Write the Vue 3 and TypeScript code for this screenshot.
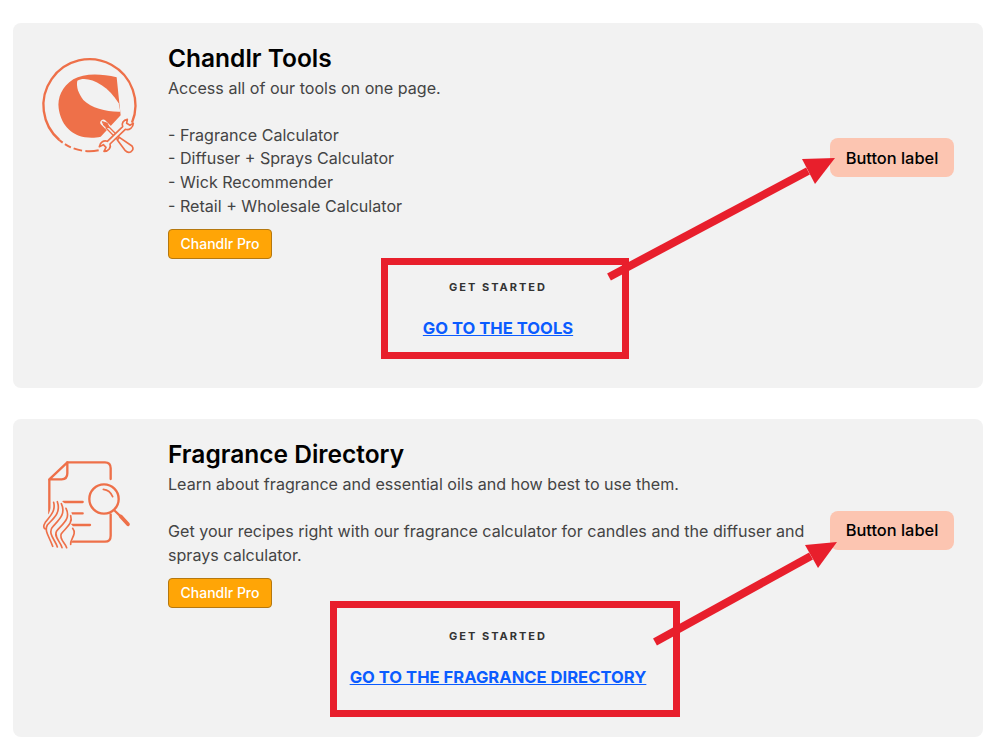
<script setup lang="ts">
interface Card {
  id: string;
  title: string;
  lines: string[];
  link: string;
  rect: { x: number; y: number; width: number; height: number };
  shaft: string;
  head: string;
}

// annotation coordinates are relative to the card's top left corner
const cards: Card[] = [
  {
    id: 'tools',
    title: 'Chandlr Tools',
    lines: [
      'Access all of our tools on one page.',
      '',
      '- Fragrance Calculator',
      '- Diffuser + Sprays Calculator',
      '- Wick Recommender',
      '- Retail + Wholesale Calculator'
    ],
    link: 'GO TO THE TOOLS',
    rect: { x: 371.5, y: 238.5, width: 241, height: 94 },
    shaft: 'M596 254 L795 148',
    head: '822,135 789,136 802,161'
  },
  {
    id: 'directory',
    title: 'Fragrance Directory',
    lines: [
      'Learn about fragrance and essential oils and how best to use them.',
      '',
      'Get your recipes right with our fragrance calculator for candles and the diffuser and sprays calculator.'
    ],
    link: 'GO TO THE FRAGRANCE DIRECTORY',
    rect: { x: 320.5, y: 185.5, width: 343, height: 109 },
    shaft: 'M642 223 L798 137',
    head: '824,123 792,126 805,149'
  }
];
</script>

<template>
  <div class="page">
    <section v-for="card in cards" :key="card.id" class="card">
      <div class="row">
        <svg
          v-if="card.id === 'tools'"
          class="icon icon-tools"
          xmlns="http://www.w3.org/2000/svg"
          width="140"
          height="130"
          viewBox="0 0 420 390"
          fill="none"
        >
          <path d="M118 300 A138 138 0 1 1 336 248" stroke="#ee7049" stroke-width="7" />
          <path d="M118 300 A138 138 0 0 0 240 330" stroke="#ee7049" stroke-width="6" stroke-dasharray="13 8 20 9 26 10 40 9" />
          <path d="M290 112 C240 100 190 100 160 118 C125 140 112 175 116 205 C122 250 150 285 195 292 C210 294 228 294 242 290 L302 226 L296 170 Z" fill="#ee7049" />
          <path d="M172 122 C200 106 260 130 296 190 L301 215 C260 216 215 205 190 180 C175 160 168 140 172 122 Z" fill="#f2f2f2" />
          <g stroke-linejoin="round" stroke-linecap="round">
            <path d="M250 248 L268 266 L335 332 M320 246 L245 318" stroke="#f2f2f2" stroke-width="18" />
            <path d="M248 245 L262 250 L267 263 L258 262 L252 256 Z" fill="#ee7049" stroke="#ee7049" stroke-width="3" />
            <path d="M264 258 L302 296 M258 264 L296 302" stroke="#ee7049" stroke-width="4" />
            <path d="M298 292 L336 318 Q343 328 333 335 Q324 340 316 332 L292 300 Z" fill="#f2f2f2" stroke="#ee7049" stroke-width="5" />
            <path d="M322 238 C310 240 304 250 308 260 L262 304 C252 300 240 306 238 320 L250 314 L258 322 L252 334 C266 334 274 322 270 312 L316 268 C328 272 340 262 340 250 L330 256 L320 250 Z" fill="#f2f2f2" stroke="#ee7049" stroke-width="5" />
          </g>
        </svg>
        <svg
          v-else
          class="icon icon-directory"
          xmlns="http://www.w3.org/2000/svg"
          width="130"
          height="120"
          viewBox="0 0 390 360"
          fill="none"
          stroke="#ee7049"
          stroke-width="7"
          stroke-linecap="round"
          stroke-linejoin="round"
        >
          <path d="M142 52 H255 Q272 52 272 70 V102 M272 208 V272 Q272 290 255 290 H150 M88 105 V205" />
          <path d="M142 52 L88 103 H125 Q142 103 142 85 Z" />
          <path d="M130 171 H188 M155 205 H188 M155 240 H210" />
          <circle cx="252" cy="162" r="44" />
          <path d="M250 133 Q270 135 278 155" stroke-width="5" />
          <path d="M285 198 L302 214" />
          <path d="M302 214 L324 238" stroke-width="11" />
          <path d="M100 170 L125 168 C155 190 165 215 150 235 C175 255 165 285 140 310 L95 310 L70 250 Z" fill="#f2f2f2" stroke="none" />
          <g stroke-width="5">
            <path d="M101 172 C108 200 88 215 76 232 C68 245 72 250 76 252" />
            <path d="M112 170 C124 205 98 222 82 240 C72 258 88 275 98 304" />
            <path d="M124 176 C140 210 112 228 96 248 C84 268 106 285 112 306" />
            <path d="M138 190 C154 222 126 238 110 258 C100 276 122 290 126 308" />
            <path d="M152 212 C160 235 138 248 124 266 C116 282 136 294 140 308" />
            <path d="M158 250 C172 268 150 282 152 298" />
          </g>
        </svg>
        <div class="main">
          <h2 class="title">{{ card.title }}</h2>
          <p class="text">
            <template v-for="(line, i) in card.lines" :key="i">{{ line }}<br /></template>
          </p>
          <span class="pro">Chandlr Pro</span>
        </div>
        <button class="label" type="button">Button label</button>
      </div>
      <div class="cta">
        <div class="eyebrow">GET STARTED</div>
        <a class="link" href="#">{{ card.link }}</a>
      </div>
      <svg class="note" xmlns="http://www.w3.org/2000/svg" width="970" height="365" fill="none">
        <rect v-bind="card.rect" stroke="#e81f2c" stroke-width="7" />
        <path :d="card.shaft" stroke="#e81f2c" stroke-width="8" />
        <polygon :points="card.head" fill="#e81f2c" />
      </svg>
    </section>
  </div>
</template>

<style scoped>
.page {
  display: flex;
  flex-direction: column;
  gap: 31px;
  padding: 23px 11px 0 13px;
  font-family: Inter, "Liberation Sans", sans-serif;
}
.card {
  position: relative;
  background: #f2f2f2;
  border-radius: 8px;
  padding: 20px 29px 0 0;
}
.row {
  display: flex;
  align-items: flex-start;
}
.icon {
  flex: none;
  margin-left: 7px;
}
.icon-tools {
  margin-top: -3px;
  margin-right: 8px;
}
.icon-directory {
  margin-top: 6px;
  margin-right: 18px;
}
.main {
  flex: 1;
  min-width: 0;
  padding-right: 18px;
}
.title {
  margin: 0 0 3.6px;
  font-size: 24.5px;
  line-height: 30px;
  font-weight: 600;
  color: #000;
}
.text {
  margin: 0 0 11px;
  font-size: 16.1px;
  line-height: 23.6px;
  color: #444;
}
.pro {
  display: inline-block;
  width: 104px;
  box-sizing: border-box;
  padding: 0;
  text-align: center;
  background: #ffa506;
  border: 1px solid #b5780f;
  border-radius: 4px;
  color: #fff;
  font-size: 14px;
  font-weight: 500;
  line-height: 28px;
}
.label {
  flex: none;
  align-self: center;
  margin-top: 13px;
  width: 124px;
  height: 39px;
  padding: 0;
  border: 0;
  border-radius: 8px;
  background: #fcc5b1;
  color: #000;
  font-family: inherit;
  font-size: 16.4px;
  font-weight: 500;
}
.cta {
  display: flex;
  flex-direction: column;
  align-items: center;
  margin-right: -29px;
  padding: 20px 0 48px;
}
.eyebrow {
  font-size: 11px;
  line-height: 16px;
  font-weight: 700;
  letter-spacing: 2px;
  color: #333;
}
.link {
  margin-top: 21px;
  font-size: 16.6px;
  line-height: 24px;
  font-weight: 700;
  color: #0b5cff;
}
.note {
  position: absolute;
  left: 0;
  top: 0;
  pointer-events: none;
}
</style>
